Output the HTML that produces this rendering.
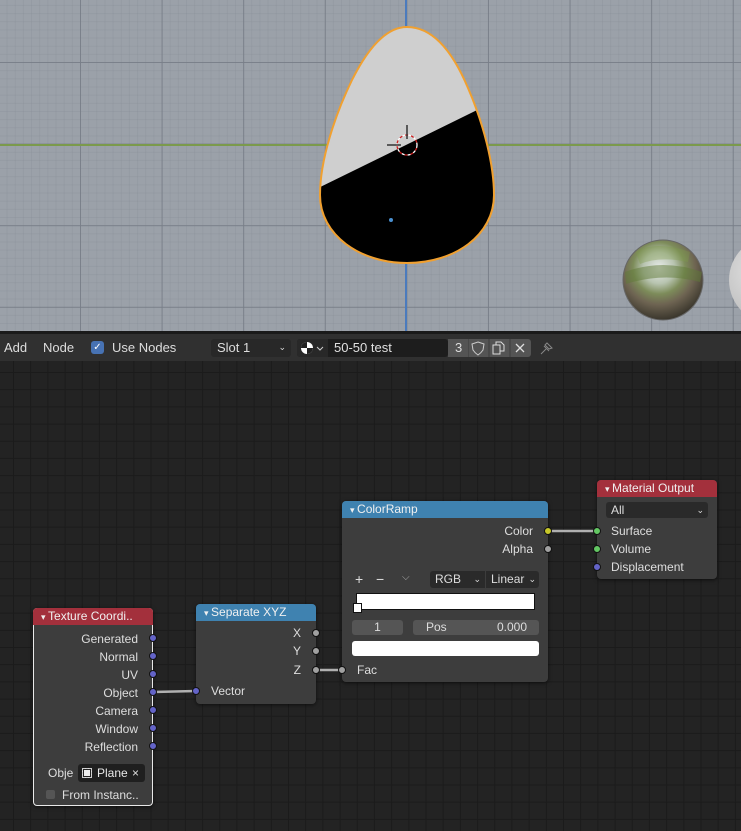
<!DOCTYPE html>
<html><head><meta charset="utf-8"><style>
*{margin:0;padding:0;box-sizing:border-box}
body{width:741px;height:831px;overflow:hidden;background:#232323;font-family:"Liberation Sans","DejaVu Sans",sans-serif;font-size:12px;color:#e0e0e0;position:relative}
.a{position:absolute}
#vp{left:0;top:0;width:741px;height:331px;background-color:#9ba1a9;
background-image:
linear-gradient(90deg,rgba(120,126,136,.9) 1px,transparent 1px),
linear-gradient(0deg,rgba(120,126,136,.9) 1px,transparent 1px),
linear-gradient(90deg,rgba(130,136,146,.25) 1px,transparent 1px),
linear-gradient(0deg,rgba(130,136,146,.25) 1px,transparent 1px);
background-size:81.6px 81.6px,81.6px 81.6px,8.16px 8.16px,8.16px 8.16px;
background-position:80px 63px,80px 63px,80px 63px,80px 63px;overflow:hidden}
#ne{left:0;top:361px;width:741px;height:470px;background-color:#232323;
background-image:linear-gradient(90deg,#1b1b1b 1px,transparent 1px),linear-gradient(0deg,#1b1b1b 1px,transparent 1px);
background-size:17.2px 17.2px;background-position:13px 12px}
#hd{left:0;top:334px;width:741px;height:27px;background:#303030}
.node{position:absolute;background:#3d3d3d;border-radius:4px;box-shadow:0 1px 4px rgba(0,0,0,.6)}
.nh{height:17px;border-radius:4px 4px 0 0;color:#f0f0f0;padding-left:8px;line-height:17px;font-size:12px}
.nh:before{content:"▾ ";font-size:9px}
.r{position:absolute;font-size:12px;color:#dedede;line-height:14px}
.s{position:absolute;width:8px;height:8px;border-radius:50%;border:1px solid #111}
.blu{background:#6363c7}.gry{background:#a1a1a1}.yel{background:#c7c729}.grn{background:#63c763}
.btn{position:absolute;background:#282828;border-radius:3px;color:#ddd;font-size:12px;line-height:17px}
</style></head><body>
<div id="vp" class="a">
<div class="a" style="left:0;top:144px;width:741px;height:2px;background:#7b9a4c"></div>
<div class="a" style="left:405px;top:0;width:2px;height:331px;background:#4b7bbd"></div>
<svg class="a" style="left:0;top:0" width="741" height="331">
<defs><clipPath id="eg"><path d="M407,27 C432,27 452,50 468,88 C484,125 494,165 494,195 C494,235 455,263 407,263 C360,263 320,235 320,195 C320,160 335,115 352,80 C368,48 386,27 407,27Z"/></clipPath>
<radialGradient id="sp" cx="0.45" cy="0.35" r="0.65"><stop offset="0" stop-color="#e8ecea"/><stop offset="0.3" stop-color="#b8c4b0"/><stop offset="0.5" stop-color="#7d8c5a"/><stop offset="0.7" stop-color="#6e6452"/><stop offset="1" stop-color="#3a362c"/></radialGradient>
<radialGradient id="ws" cx="0.4" cy="0.4" r="0.7"><stop offset="0" stop-color="#e6e6e6"/><stop offset="1" stop-color="#b8b8b8"/></radialGradient></defs>
<g clip-path="url(#eg)"><rect x="300" y="0" width="220" height="280" fill="#000"/><polygon points="300,0 520,0 520,89 300,197" fill="#cfcfcf"/></g>
<path d="M407,27 C432,27 452,50 468,88 C484,125 494,165 494,195 C494,235 455,263 407,263 C360,263 320,235 320,195 C320,160 335,115 352,80 C368,48 386,27 407,27Z" fill="none" stroke="#f0a030" stroke-width="2"/>
<circle cx="407" cy="145" r="10" fill="none" stroke="#fff" stroke-width="1.3" stroke-dasharray="3 3"/>
<circle cx="407" cy="145" r="10" fill="none" stroke="#d02020" stroke-width="1.3" stroke-dasharray="3 3" stroke-dashoffset="3"/>
<line x1="407" y1="125" x2="407" y2="139" stroke="#333" stroke-width="1.5"/><line x1="387" y1="145" x2="401" y2="145" stroke="#333" stroke-width="1.5"/>
<circle cx="391" cy="220" r="2" fill="#4a90d0"/>
<circle cx="663" cy="280" r="40" fill="url(#sp)"/>
<path d="M625,272 Q663,258 702,272 L700,282 Q663,272 626,284Z" fill="#5f7a38" opacity=".5"/>
<path d="M636,252 Q655,240 690,252 L688,262 Q660,256 640,264Z" fill="#7e9a4a" opacity=".35"/>
<circle cx="663" cy="280" r="40" fill="none" stroke="#666" stroke-width="1"/>
<circle cx="773" cy="280" r="44" fill="url(#ws)"/>
</svg>
</div>
<div class="a" style="left:0;top:331px;width:741px;height:3px;background:#1a1a1a"></div>
<div id="hd" class="a">
<span class="a" style="left:4px;top:6px;color:#ddd;font-size:13px">Add</span>
<span class="a" style="left:43px;top:6px;color:#ddd;font-size:13px">Node</span>
<div class="a" style="left:91px;top:7px;width:13px;height:13px;background:#4772b3;border-radius:3px;color:#fff;font-size:10px;line-height:13px;text-align:center">✓</div>
<span class="a" style="left:112px;top:6px;color:#ddd;font-size:13px">Use Nodes</span>
<div class="btn" style="left:211px;top:5px;width:80px;height:18px;padding-left:6px;font-size:13px">Slot 1<span style="position:absolute;right:5px;font-size:9px">⌄</span></div>
<div class="a" style="left:297px;top:5px;width:151px;height:18px;background:#1d1d1d;border-radius:3px"></div>
<div class="a" style="left:297px;top:5px;width:31px;height:18px;background:#282828;border-radius:3px 0 0 3px"></div>
<svg class="a" style="left:300px;top:7px" width="26" height="14"><circle cx="7" cy="7" r="6" fill="#fff"/><path d="M7,1 A6,6 0 0 0 1,7 L7,7Z M7,7 L13,7 A6,6 0 0 1 7,13Z" fill="#222"/><path d="M17,6 l3,3 l3,-3" stroke="#ccc" fill="none"/></svg>
<span class="a" style="left:334px;top:5px;color:#e0e0e0;font-size:13px;line-height:18px">50-50 test</span>
<div class="a" style="left:448px;top:5px;width:83px;height:18px;background:#545454;border-radius:0 3px 3px 0"></div>
<span class="a" style="left:455px;top:5px;color:#ddd;font-size:13px;line-height:18px">3</span>
<svg class="a" style="left:468px;top:5px" width="63" height="18"><line x1="0" y1="0" x2="0" y2="18" stroke="#3c3c3c"/><line x1="21" y1="0" x2="21" y2="18" stroke="#3c3c3c"/><line x1="42" y1="0" x2="42" y2="18" stroke="#3c3c3c"/>
<path d="M10,3 L16,5 L15,11 Q13,14 10,16 Q7,14 5,11 L4,5Z" fill="none" stroke="#ccc"/>
<path d="M25,6 h7 v9 h-7z M28,6 v-3 h5 l3,3 v6 h-4" fill="none" stroke="#ddd"/>
<path d="M48,5 l8,8 M56,5 l-8,8" stroke="#ddd" stroke-width="1.3"/></svg>
<svg class="a" style="left:538px;top:6px" width="18" height="16"><path d="M3,14 l5,-5 M6,6 l5,5 M9,3 l5,5 l-3,1 l-4,-4z" stroke="#888" fill="none"/></svg>
</div>
<div id="ne" class="a"></div>
<svg class="a" style="left:0;top:0" width="741" height="831">
<g stroke="#b0b0b0" stroke-width="2.5" fill="none"><path d="M548,531 L597,531"/><path d="M153,692 L196,691"/><path d="M316,670 L342,670"/></g>
</svg>
<div class="node" style="left:33px;top:608px;width:120px;height:198px;border:1px solid #e8e8e8">
<div class="nh" style="background:#a3303c;margin:-1px -1px 0;height:17px">Texture Coordi..</div>
<div class="r" style="right:14px;top:23px">Generated</div>
<div class="r" style="right:14px;top:41px">Normal</div>
<div class="r" style="right:14px;top:59px">UV</div>
<div class="r" style="right:14px;top:77px">Object</div>
<div class="r" style="right:14px;top:95px">Camera</div>
<div class="r" style="right:14px;top:113px">Window</div>
<div class="r" style="right:14px;top:131px">Reflection</div>
<div class="r" style="left:14px;top:157px">Obje</div>
<div class="a" style="left:44px;top:155px;width:67px;height:18px;background:#1f1f1f;border-radius:3px"></div>
<div class="a" style="left:48px;top:159px;width:10px;height:10px;border:1px dashed #ccc;background:#eee;box-shadow:inset 0 0 0 1px #222"></div>
<div class="r" style="left:63px;top:157px;color:#e8e8e8">Plane</div>
<div class="r" style="left:98px;top:157px">×</div>
<div class="a" style="left:12px;top:181px;width:9px;height:9px;background:#555;border-radius:2px"></div>
<div class="r" style="left:28px;top:179px">From Instanc..</div>
</div>
<div class="s blu" style="left:149px;top:634px"></div><div class="s blu" style="left:149px;top:652px"></div><div class="s blu" style="left:149px;top:670px"></div><div class="s blu" style="left:149px;top:688px"></div><div class="s blu" style="left:149px;top:706px"></div><div class="s blu" style="left:149px;top:724px"></div><div class="s blu" style="left:149px;top:742px"></div>
<div class="node" style="left:196px;top:604px;width:120px;height:100px">
<div class="nh" style="background:#3f82b0">Separate XYZ</div>
<div class="r" style="right:15px;top:22px">X</div>
<div class="r" style="right:15px;top:40px">Y</div>
<div class="r" style="right:15px;top:59px">Z</div>
<div class="r" style="left:15px;top:80px">Vector</div>
</div>
<div class="s gry" style="left:312px;top:629px"></div><div class="s gry" style="left:312px;top:647px"></div><div class="s gry" style="left:312px;top:666px"></div><div class="s blu" style="left:192px;top:687px"></div>
<div class="node" style="left:342px;top:501px;width:206px;height:181px">
<div class="nh" style="background:#3f82b0">ColorRamp</div>
<div class="r" style="right:15px;top:23px">Color</div>
<div class="r" style="right:15px;top:41px">Alpha</div>
<div class="r" style="left:13px;top:71px;font-size:14px">+</div>
<div class="r" style="left:34px;top:71px;font-size:14px">−</div>
<div class="r" style="left:60px;top:70px;font-size:10px;color:#aaa">⌵</div>
<div class="btn" style="left:88px;top:70px;width:55px;height:17px;padding-left:5px;background:#2a2a2a;border-radius:3px 0 0 3px">RGB<span style="position:absolute;right:4px;font-size:9px">⌄</span></div>
<div class="btn" style="left:144px;top:70px;width:53px;height:17px;padding-left:5px;background:#2a2a2a;border-radius:0 3px 3px 0">Linear<span style="position:absolute;right:3px;font-size:9px">⌄</span></div>
<div class="a" style="left:14px;top:92px;width:179px;height:17px;background:#fff;border:1px solid #111"></div>
<div class="a" style="left:11px;top:102px;width:9px;height:10px;background:#fff;border:1px solid #111"></div>
<div class="a" style="left:10px;top:119px;width:51px;height:15px;background:#555;border-radius:3px;text-align:center;line-height:15px;color:#ddd">1</div>
<div class="a" style="left:71px;top:119px;width:126px;height:15px;background:#555;border-radius:3px;line-height:15px;color:#ddd"><span style="position:absolute;left:13px">Pos</span><span style="position:absolute;right:12px">0.000</span></div>
<div class="a" style="left:10px;top:140px;width:187px;height:15px;background:#fff;border-radius:3px"></div>
<div class="r" style="left:15px;top:162px">Fac</div>
</div>
<div class="s yel" style="left:544px;top:527px"></div><div class="s gry" style="left:544px;top:545px"></div><div class="s gry" style="left:338px;top:666px"></div>
<div class="node" style="left:597px;top:480px;width:120px;height:99px">
<div class="nh" style="background:#a3303c">Material Output</div>
<div class="btn" style="left:9px;top:22px;width:102px;height:16px;padding-left:5px;line-height:16px;background:#2a2a2a">All<span style="position:absolute;right:4px;font-size:9px">⌄</span></div>
<div class="r" style="left:14px;top:44px">Surface</div>
<div class="r" style="left:14px;top:62px">Volume</div>
<div class="r" style="left:14px;top:80px">Displacement</div>
</div>
<div class="s grn" style="left:593px;top:527px"></div><div class="s grn" style="left:593px;top:545px"></div><div class="s blu" style="left:593px;top:563px"></div>
</body></html>
